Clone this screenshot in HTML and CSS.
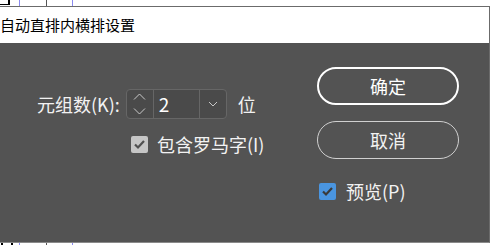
FILE: index.html
```html
<!DOCTYPE html>
<html lang="zh-CN">
<head>
<meta charset="utf-8">
<title>自动直排内横排设置</title>
<link rel="stylesheet" href="styles.css">
</head>
<body>
<div class="strip strip-top">
  <span class="mark-corner"></span>
  <span class="vline blue v1"></span>
  <span class="vline dark v2"></span>
  <span class="vline blue v3"></span>
</div>
<div class="dialog">
  <div class="titlebar">自动直排内横排设置</div>
  <div class="content">
    <div class="left">
      <div class="row">
        <span class="label">元组数(K):</span>
        <div class="spinner">
          <div class="arrows">
            <svg width="13" height="7" viewBox="0 0 13 7"><path d="M1 6.5 L6.5 1 L12 6.5" fill="none" stroke="#c8c8c8" stroke-width="1"/></svg>
            <svg width="13" height="7" viewBox="0 0 13 7"><path d="M1 0.5 L6.5 6 L12 0.5" fill="none" stroke="#c8c8c8" stroke-width="1"/></svg>
          </div>
          <div class="value">2</div>
          <div class="drop">
            <svg width="10" height="6" viewBox="0 0 10 6"><path d="M1 1 L5 5 L9 1" fill="none" stroke="#c8c8c8" stroke-width="1"/></svg>
          </div>
        </div>
        <span class="unit">位</span>
      </div>
      <div class="row check-row">
        <span class="box gray">
          <svg width="17" height="17" viewBox="0 0 17 17"><path d="M4 8.5 L7 11.5 L13 5" fill="none" stroke="#505050" stroke-width="2.2"/></svg>
        </span>
        <span class="label">包含罗马字(I)</span>
      </div>
    </div>
    <div class="right">
      <div class="btn primary">确定</div>
      <div class="btn">取消</div>
      <div class="preview">
        <span class="box blue">
          <svg width="17" height="17" viewBox="0 0 17 17"><path d="M4 8.5 L7 11.5 L13 5" fill="none" stroke="#3a3a3a" stroke-width="2.2"/></svg>
        </span>
        <span class="label">预览(P)</span>
      </div>
    </div>
  </div>
</div>
<div class="strip strip-bottom">
  <span class="vline black b1"></span>
  <span class="vline black b2"></span>
  <span class="vline blue v1"></span>
  <span class="vline dark v2"></span>
  <span class="vline blue v3"></span>
</div>
</body>
</html>
```

FILE: styles.css
```css
html, body {
  margin: 0;
  padding: 0;
  background: #ffffff;
  width: 494px;
  height: 246px;
  overflow: hidden;
  font-family: "Noto Sans CJK SC", "Noto Sans", sans-serif;
}

.strip {
  position: relative;
  width: 494px;
  background: #ffffff;
}
.strip-top { height: 6px; }
.strip-bottom { height: 2px; }

.vline {
  position: absolute;
  top: 0;
  bottom: 0;
  width: 1px;
}
.vline.blue { background: #8a8af0; }
.vline.dark { background: #555555; }
.vline.black { background: #000000; width: 2px; }
.v1 { left: 19px; }
.v2 { left: 46px; }
.v3 { left: 72px; }
.b1 { left: 1px; }
.b2 { left: 11px; }

.mark-corner {
  position: absolute;
  left: 0;
  top: 0;
  width: 8px;
  height: 4px;
  border-bottom: 1px solid #000;
  border-right: 2px solid #000;
}

.dialog {
  width: 489px;
  border-top: 1px solid #6b6b6b;
  border-right: 1px solid #6b6b6b;
  border-bottom: 1px solid #8a8a8a;
  background: #535353;
}

.titlebar {
  height: 36px;
  background: #ffffff;
  color: #000000;
  font-size: 15px;
  line-height: 36px;
  padding-left: 0;
  white-space: nowrap;
}

.content {
  height: 199px;
  display: flex;
  padding-top: 24px;
  box-sizing: border-box;
}

.left {
  margin-left: 37px;
  margin-top: 22px;
  width: 280px;
  display: flex;
  flex-direction: column;
  gap: 15px;
}

.row {
  display: flex;
  align-items: center;
  color: #f2f2f2;
  font-size: 18px;
}

.label {
  font-size: 18px;
  color: #f2f2f2;
  line-height: 20px;
  white-space: nowrap;
}

.spinner {
  margin-left: 6px;
  width: 101px;
  height: 30px;
  box-sizing: border-box;
  border: 1px solid #666666;
  border-radius: 4px;
  background: #4a4a4a;
  display: flex;
}

.arrows {
  width: 26px;
  border-right: 1px solid #666666;
  display: flex;
  flex-direction: column;
  align-items: center;
  justify-content: center;
  gap: 8px;
}

.value {
  width: 46px;
  border-right: 1px solid #666666;
  color: #ffffff;
  font-size: 19px;
  line-height: 28px;
  padding-left: 5px;
  box-sizing: border-box;
}

.drop {
  flex: 1;
  display: flex;
  align-items: center;
  justify-content: center;
}

.unit {
  margin-left: 11px;
  font-size: 18px;
  color: #f2f2f2;
}

.check-row {
  padding-left: 94px;
  gap: 9px;
}

.box {
  width: 17px;
  height: 17px;
  border-radius: 2px;
  display: flex;
  flex: none;
}
.box.gray { background: #c6c6c6; }
.box.blue { background: #4a95e0; }

.right {
  margin-left: 0;
  width: 142px;
  display: flex;
  flex-direction: column;
}

.btn {
  width: 142px;
  height: 38px;
  box-sizing: border-box;
  border: 1px solid #d0d0d0;
  border-radius: 19px;
  color: #f2f2f2;
  font-size: 18px;
  display: flex;
  align-items: center;
  justify-content: center;
  margin-bottom: 16px;
}
.btn.primary {
  border: 2px solid #ffffff;
  color: #ffffff;
}

.preview {
  margin-top: 6px;
  margin-left: 2px;
  display: flex;
  align-items: center;
  gap: 10px;
}
```
